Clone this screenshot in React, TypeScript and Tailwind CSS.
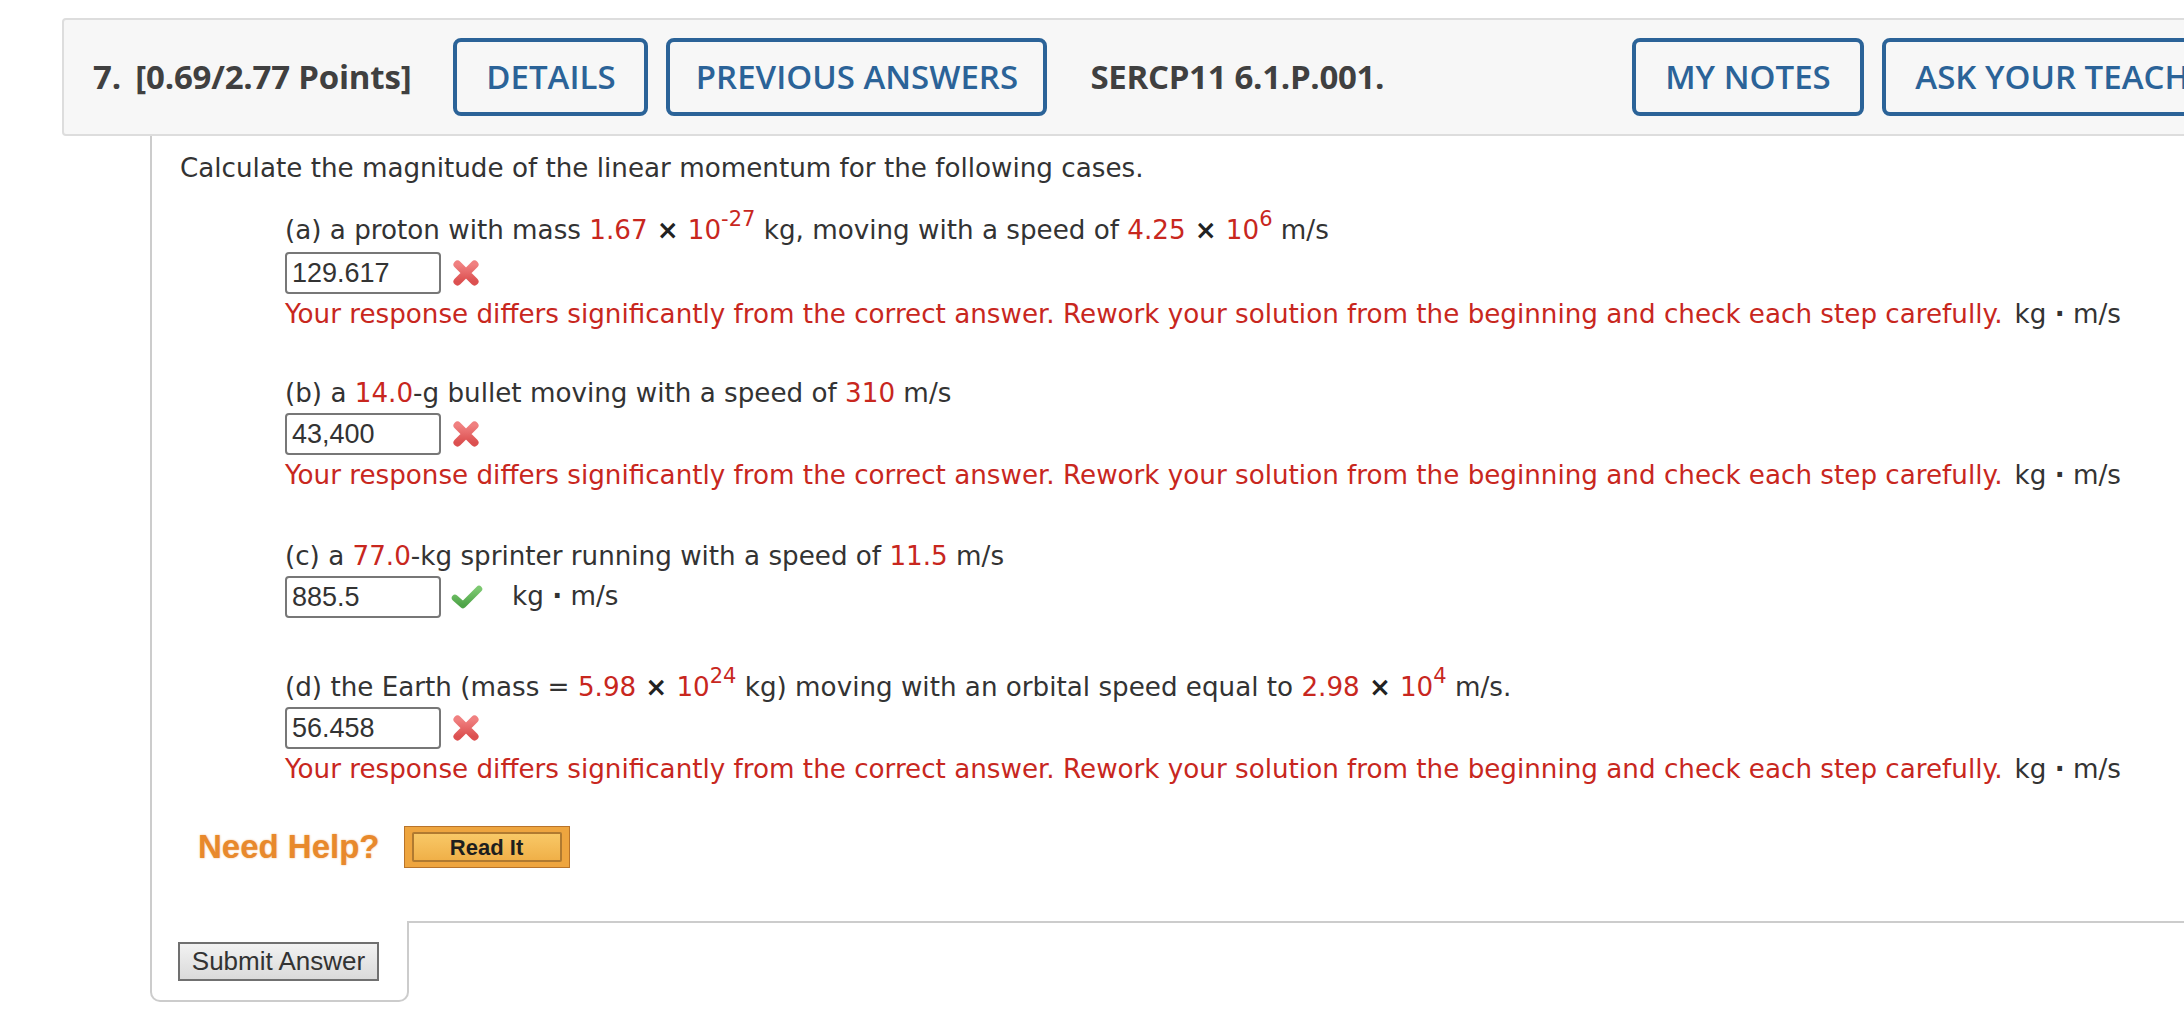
import React from "react";

const red = "text-[#c8271e]";

function XMark() {
  return (
    <svg width="32" height="32" viewBox="0 0 32 32" className="ml-[9px]">
      <defs>
        <linearGradient id="xg" x1="0" y1="0" x2="0" y2="1">
          <stop offset="0" stopColor="#f08080" />
          <stop offset="1" stopColor="#dc5050" />
        </linearGradient>
      </defs>
      <path d="M7.5 7.5 L24.5 24.5 M24.5 7.5 L7.5 24.5" stroke="url(#xg)" strokeWidth="8" strokeLinecap="round" />
    </svg>
  );
}

function CheckMark() {
  return (
    <svg width="32" height="26" viewBox="0 0 32 26" className="ml-[10px]">
      <defs>
        <linearGradient id="cg" x1="0" y1="0" x2="0" y2="1">
          <stop offset="0" stopColor="#7cc870" />
          <stop offset="1" stopColor="#4ea448" />
        </linearGradient>
      </defs>
      <path d="M4 14 L12 21 L28 5" fill="none" stroke="url(#cg)" strokeWidth="6.5" strokeLinecap="round" strokeLinejoin="round" />
    </svg>
  );
}

function AnswerBox({ value }: { value: string }) {
  return (
    <div className="w-[156px] h-[42px] border-2 border-[#777777] rounded-[4px] bg-white flex items-center pl-[5px] font-['Liberation_Sans',Arial,sans-serif] text-[27px] text-[#333]">
      {value}
    </div>
  );
}

function Unit() {
  return (
    <span className="text-[#333]">
      kg <span className="font-bold">·</span> m/s
    </span>
  );
}

function Feedback() {
  return (
    <div className="leading-[40px] whitespace-nowrap">
      <span className={red}>
        Your response differs significantly from the correct answer. Rework your solution from the beginning and check each step carefully.
      </span>
      <span className="ml-[12px]">
        <Unit />
      </span>
    </div>
  );
}

function Times() {
  return <span className="font-bold text-[#222]"> × </span>;
}

function Pow({ exp }: { exp: string }) {
  return (
    <span className={red}>
      10<sup className="text-[21px] top-[-13px]">{exp}</sup>
    </span>
  );
}

function HeaderButton({ label, width, className = "" }: { label: string; width: string; className?: string }) {
  return (
    <div
      className={`${width} ${className} h-[78px] shrink-0 border-4 border-[#2b6398] rounded-[8px] flex items-center justify-center font-semibold text-[#2b6398] whitespace-nowrap`}
    >
      {label}
    </div>
  );
}

export default function App() {
  return (
    <div className="w-[2184px] h-[1031px] overflow-hidden bg-white font-['DejaVu_Sans',Verdana,sans-serif] text-[26.2px] text-[#333]">
      <div className="w-[2400px] pl-[62px] pt-[18px]">
        {/* header */}
        <div className="w-[2232px] h-[118px] flex items-center bg-[#f7f7f7] border-2 border-[#dddddd] rounded-[4px] pl-[29px] pr-[30px] font-['Open_Sans',sans-serif] text-[33px]">
          <span className="font-bold text-[#404040]">7.</span>
          <span className="font-bold text-[#404040] ml-[14px] tracking-[-0.2px]">[0.69/2.77 Points]</span>
          <HeaderButton label="DETAILS" width="w-[195px]" className="ml-[42px]" />
          <HeaderButton label="PREVIOUS ANSWERS" width="w-[381px]" className="ml-[18px]" />
          <span className="font-bold text-[#404040] ml-[43px] whitespace-nowrap tracking-[-0.3px]">SERCP11 6.1.P.001.</span>
          <HeaderButton label="MY NOTES" width="w-[232px]" className="ml-auto" />
          <HeaderButton label="ASK YOUR TEACHER" width="w-[380px]" className="ml-[18px]" />
        </div>

        {/* question body */}
        <div className="ml-[88px] border-l-2 border-[#cccccc] pl-[28px] pt-[12px] pb-[53px]">
          <p className="leading-[40px] whitespace-nowrap">Calculate the magnitude of the linear momentum for the following cases.</p>

          <div className="pl-[105px]">
            {/* (a) */}
            <div className="mt-[22px] leading-[40px] whitespace-nowrap">
              (a) a proton with mass <span className={red}>1.67</span>
              <Times />
              <Pow exp="-27" /> kg, moving with a speed of <span className={red}>4.25</span>
              <Times />
              <Pow exp="6" /> m/s
            </div>
            <div className="mt-[2px] flex items-center">
              <AnswerBox value="129.617" />
              <XMark />
            </div>
            <Feedback />

            {/* (b) */}
            <div className="mt-[39px] leading-[40px] whitespace-nowrap">
              (b) a <span className={red}>14.0</span>-g bullet moving with a speed of <span className={red}>310</span> m/s
            </div>
            <div className="flex items-center">
              <AnswerBox value="43,400" />
              <XMark />
            </div>
            <Feedback />

            {/* (c) */}
            <div className="mt-[41px] leading-[40px] whitespace-nowrap">
              (c) a <span className={red}>77.0</span>-kg sprinter running with a speed of <span className={red}>11.5</span> m/s
            </div>
            <div className="flex items-center">
              <AnswerBox value="885.5" />
              <CheckMark />
              <span className="ml-[29px]">
                <Unit />
              </span>
            </div>

            {/* (d) */}
            <div className="mt-[49px] leading-[40px] whitespace-nowrap">
              (d) the Earth (mass = <span className={red}>5.98</span>
              <Times />
              <Pow exp="24" /> kg) moving with an orbital speed equal to <span className={red}>2.98</span>
              <Times />
              <Pow exp="4" /> m/s.
            </div>
            <div className="flex items-center">
              <AnswerBox value="56.458" />
              <XMark />
            </div>
            <Feedback />
          </div>

          {/* help */}
          <div className="mt-[37px] ml-[18px] h-[42px] flex items-center">
            <span className="font-['Liberation_Sans',Arial,sans-serif] font-bold text-[33px] text-[#e8892c] [text-shadow:0_0_2px_rgba(232,137,44,0.6)]">
              Need Help?
            </span>
            <div className="ml-[24px] w-[166px] h-[42px] bg-[#eea53f] border border-[#b9742a] flex items-center justify-center">
              <div className="w-[150px] h-[30px] bg-gradient-to-b from-[#f8c866] to-[#f0b048] border-2 border-[#b07a30] rounded-[2px] flex items-center justify-center font-['Liberation_Sans',Arial,sans-serif] font-bold text-[22px] text-[#1e1e1e]">
                Read It
              </div>
            </div>
          </div>
        </div>

        {/* footer tab */}
        <div className="ml-[88px] flex">
          <div className="w-[259px] h-[81px] border-l-2 border-r-2 border-b-2 border-[#cccccc] rounded-b-[10px] pl-[26px] pt-[21px]">
            <div className="w-[201px] h-[39px] border-2 border-[#707070] bg-gradient-to-b from-[#f2f2f2] to-[#dadada] flex items-center justify-center font-['Liberation_Sans',Arial,sans-serif] text-[26px] text-[#333]">
              Submit Answer
            </div>
          </div>
          <div className="flex-1 border-t-2 border-[#cccccc]" />
        </div>
      </div>
    </div>
  );
}
